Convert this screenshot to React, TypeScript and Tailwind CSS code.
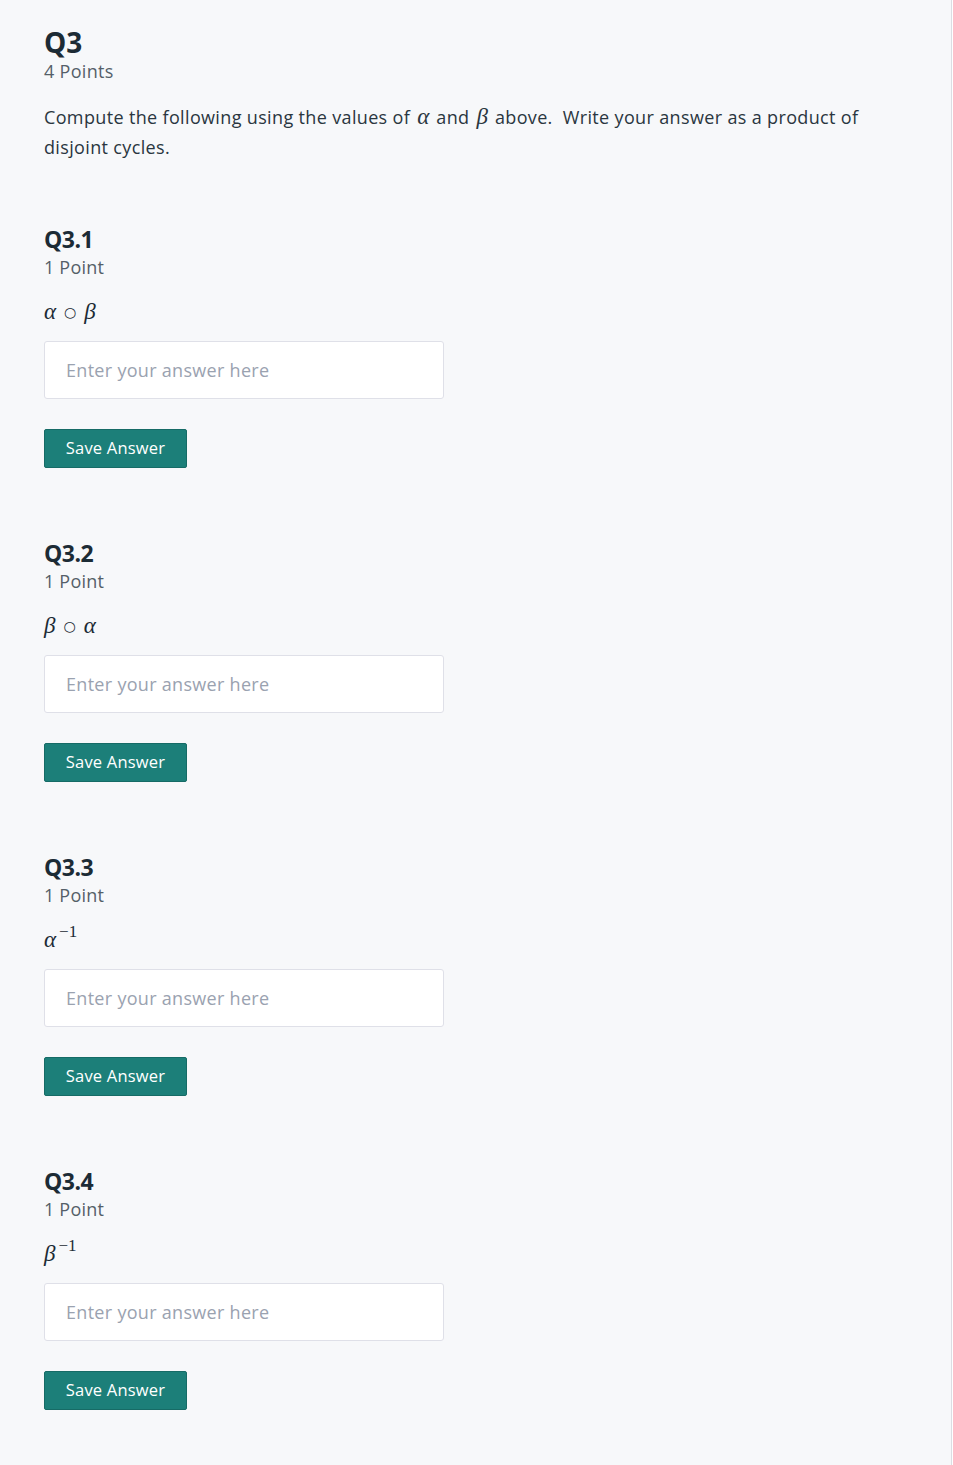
import React from "react";

const font = { fontFamily: "'Open Sans', Lato, sans-serif" };

function MathText({ children, className = "" }: { children: React.ReactNode; className?: string }) {
  return (
    <span className={"italic text-[23px] tracking-normal " + className} style={{ fontFamily: "'Liberation Serif', 'DejaVu Serif', serif" }}>
      {children}
    </span>
  );
}

function Circ() {
  return <span className="not-italic inline-block mx-[8px] text-[14px] relative -top-[2px]" style={{ fontFamily: "'DejaVu Sans', sans-serif" }}>○</span>;
}

function Inv() {
  return <sup className="not-italic text-[17px] relative -top-[10px] ml-[3px]">−1</sup>;
}

function Sub({ id, math }: { id: string; math: React.ReactNode }) {
  return (
    <section className="pt-[44px] pb-[27px]">
      <h3 className="text-[23px] font-bold leading-[28px] text-[#1c2b35] tracking-[-0.5px]">{id}</h3>
      <div className="text-[18px] leading-[28px] text-[#555f69] tracking-[0.2px]">1 Point</div>
      <div className="mt-[16px] h-[30px] text-[#1c2b35] leading-[30px]">{math}</div>
      <input
        type="text"
        placeholder="Enter your answer here"
        className="mt-[14px] block w-[400px] h-[58px] rounded-[3px] border border-[#dfe0e8] bg-white px-[21px] text-[18px] text-[#2d3b45] placeholder:text-[#9aa2b0] outline-none tracking-[0.3px]"
        style={font}
      />
      <button
        className="mt-[30px] block h-[39px] w-[143px] rounded-[2px] border border-[#166b66] bg-[#1c7f79] text-[16.5px] text-white tracking-[0.2px]"
        style={font}
      >
        Save Answer
      </button>
    </section>
  );
}

export default function App() {
  return (
    <div className="min-h-[1465px] w-[953px] bg-white" style={font}>
      <div className="min-h-[1465px] w-[952px] border-r border-[#dcdde3] bg-[#f7f8fa] pl-[44px] pr-[60px] pt-[26px]">
        <h2 className="text-[28px] font-bold leading-[32px] text-[#1c2b35]">Q3</h2>
        <div className="text-[18px] leading-[26px] text-[#555f69] tracking-[0.3px]">4 Points</div>
        <p className="mt-[18px] text-[18px] leading-[30px] text-[#2a3640] tracking-[0.35px]">
          Compute the following using the values of <MathText className="mx-[2px] leading-none">α</MathText> and <MathText className="mx-[2px] leading-none">β</MathText> above.&nbsp; Write your answer as a product of disjoint cycles.
        </p>
        <div className="mt-[19px]">
          <Sub id="Q3.1" math={<MathText>α<Circ />β</MathText>} />
          <Sub id="Q3.2" math={<MathText>β<Circ />α</MathText>} />
          <Sub id="Q3.3" math={<MathText>α<Inv /></MathText>} />
          <Sub id="Q3.4" math={<MathText>β<Inv /></MathText>} />
        </div>
      </div>
    </div>
  );
}
